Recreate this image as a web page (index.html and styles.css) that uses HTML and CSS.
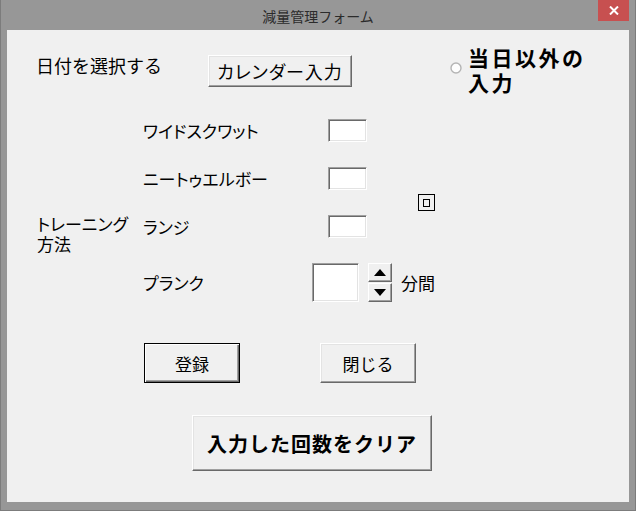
FILE: index.html
```html
<!DOCTYPE html>
<html lang="ja">
<head>
<meta charset="utf-8">
<title>減量管理フォーム</title>
<link rel="stylesheet" href="styles.css">
</head>
<body>
<div class="window">
  <div class="titlebar">
    <span class="title">減量管理フォーム</span>
    <div class="close"><svg width="10" height="9" viewBox="0 0 10 9"><path d="M1 0.5 L9 8.5 M9 0.5 L1 8.5" stroke="#fff" stroke-width="2"/></svg></div>
  </div>
  <div class="client">
    <div class="top-row">
      <span class="date-label">日付を選択する</span>
      <div class="btn btn-cal">カレンダー入力</div>
      <svg class="radio" width="12" height="12" viewBox="0 0 12 12"><circle cx="6" cy="6" r="5" fill="#fdfdfd" stroke="#b4b4b4" stroke-width="1.4"/></svg>
      <span class="bold-label">当日以外の<br>入力</span>
    </div>
    <div class="training">
      <span class="group-label">トレーニング<br>方法</span>
      <span class="ex ex1">ワイドスクワット</span>
      <div class="tb tb1"></div>
      <span class="ex ex2">ニートゥエルボー</span>
      <div class="tb tb2"></div>
      <div class="marker"><div class="marker-in"></div></div>
      <span class="ex ex3">ランジ</span>
      <div class="tb tb3"></div>
      <span class="ex ex4">プランク</span>
      <div class="tb tb-plank"></div>
      <div class="plank-extra">
        <div class="spin">
          <div class="spin-btn"><svg width="12" height="7" viewBox="0 0 12 7"><path d="M6 0 L12 7 L0 7 Z" fill="#000"/></svg></div>
          <div class="spin-btn"><svg width="12" height="7" viewBox="0 0 12 7"><path d="M0 0 L12 0 L6 7 Z" fill="#000"/></svg></div>
        </div>
        <span class="minutes">分間</span>
      </div>
    </div>
    <div class="btn-row">
      <div class="btn btn-default">登録</div>
      <div class="btn btn-close">閉じる</div>
    </div>
    <div class="btn btn-clear">入力した回数をクリア</div>
  </div>
</div>
</body>
</html>
```
FILE: styles.css
```css
html, body {
  margin: 0;
  padding: 0;
  background: #979797;
}
body {
  font-family: "Noto Sans CJK JP", "Noto Sans", sans-serif;
  color: #000;
}
.window {
  width: 636px;
  height: 511px;
  box-sizing: border-box;
  background: #979797;
  border: 1px solid #7c7c7c;
  border-top: 0;
  padding: 0 6px 8px 6px;
  display: flex;
  flex-direction: column;
}
.titlebar {
  height: 30px;
  display: grid;
  grid-template-columns: 1fr auto 1fr;
  align-items: start;
}
.title {
  grid-column: 2;
  align-self: center;
  font-size: 14px;
  line-height: 16px;
  padding-top: 1px;
  color: #2b2b2b;
}
.close {
  grid-column: 3;
  justify-self: end;
  width: 31px;
  height: 21px;
  background: #c75050;
  display: flex;
  align-items: center;
  justify-content: center;
}
.client {
  flex: 1;
  background: #f0f0f0;
  display: flex;
  flex-direction: column;
}
.top-row {
  height: 89px;
  display: flex;
  align-items: flex-start;
}
.date-label {
  margin-left: 29px;
  margin-top: 25px;
  font-size: 18px;
  line-height: 20px;
  white-space: nowrap;
}
.btn {
  box-sizing: border-box;
  background: #f0f0f0;
  border-top: 1px solid #ffffff;
  border-left: 1px solid #ffffff;
  border-right: 1px solid #696969;
  border-bottom: 1px solid #696969;
  box-shadow: inset -1px -1px 0 #a0a0a0, inset 1px 1px 0 #e3e3e3;
  display: flex;
  align-items: center;
  justify-content: center;
  white-space: nowrap;
}
.btn-cal {
  margin-left: 46px;
  margin-top: 25px;
  width: 144px;
  height: 32px;
  font-size: 18px;
  font-feature-settings: "palt";
  letter-spacing: 1px;
}
.radio {
  margin-left: 98px;
  margin-top: 32px;
}
.bold-label {
  font-family: "Liberation Sans", "Noto Sans CJK JP", sans-serif;
  margin-left: 6px;
  margin-top: 16px;
  font-size: 21px;
  line-height: 25px;
  font-weight: 700;
  letter-spacing: 2.5px;
  white-space: nowrap;
}
.training {
  display: grid;
  grid-template-columns: 106px 169px 56px auto;
  grid-template-rows: 23px 23px 23px 39px;
  row-gap: 25px;
  padding-left: 30px;
}
.ex {
  grid-column: 2;
  align-self: center;
  font-size: 17px;
  line-height: 20px;
  font-feature-settings: "palt";
  white-space: nowrap;
}
.ex1 { grid-row: 1; }
.ex2 { grid-row: 2; }
.ex3 { grid-row: 3; }
.ex4 { grid-row: 4; }
.group-label {
  font-family: "Liberation Sans", "Noto Sans CJK JP", sans-serif;
  grid-column: 1;
  grid-row: 3 / 5;
  align-self: start;
  padding-top: 1px;
  font-size: 17px;
  line-height: 20px;
  font-feature-settings: "palt";
  white-space: nowrap;
}
.tb {
  grid-column: 3;
  box-sizing: border-box;
  background: #fff;
  border-top: 1px solid #a0a0a0;
  border-left: 1px solid #a0a0a0;
  border-right: 1px solid #ffffff;
  border-bottom: 1px solid #ffffff;
  box-shadow: inset 1px 1px 0 #696969, inset -1px -1px 0 #e3e3e3;
}
.tb1, .tb2, .tb3 {
  margin-left: 16px;
  width: 39px;
  height: 23px;
}
.tb1 { grid-row: 1; }
.tb2 { grid-row: 2; }
.tb3 { grid-row: 3; }
.tb-plank {
  grid-row: 4;
  width: 47px;
  height: 39px;
}
.marker {
  grid-column: 4;
  grid-row: 2 / 4;
  align-self: center;
  justify-self: start;
  margin-left: 50px;
  width: 17px;
  height: 17px;
  box-sizing: border-box;
  border: 1px solid #000;
  display: flex;
  align-items: center;
  justify-content: center;
}
.marker-in {
  width: 7px;
  height: 8px;
  box-sizing: border-box;
  border: 1px solid #000;
}
.plank-extra {
  grid-column: 4;
  grid-row: 4;
  display: flex;
  align-items: center;
}
.spin {
  width: 24px;
  height: 39px;
  display: flex;
  flex-direction: column;
  gap: 1px;
}
.spin-btn {
  flex: 1;
  box-sizing: border-box;
  background: #f0f0f0;
  border-top: 1px solid #ffffff;
  border-left: 1px solid #ffffff;
  border-right: 1px solid #696969;
  border-bottom: 1px solid #696969;
  box-shadow: inset -1px -1px 0 #a0a0a0;
  display: flex;
  align-items: center;
  justify-content: center;
}
.minutes {
  margin-left: 9px;
  font-size: 17px;
  line-height: 20px;
}
.btn-row {
  margin-top: 41px;
  padding-left: 137px;
  display: flex;
  gap: 80px;
}
.btn-default, .btn-close {
  width: 96px;
  height: 40px;
  font-size: 17px;
}
.btn-default {
  border: 1px solid #000;
  box-shadow: inset 1px 1px 0 #ffffff, inset -1px -1px 0 #696969, inset -2px -2px 0 #a0a0a0;
}
.btn-clear {
  margin-top: 32px;
  margin-left: 185px;
  width: 240px;
  height: 56px;
  font-size: 20px;
  font-weight: 700;
  letter-spacing: 1px;
}
```
